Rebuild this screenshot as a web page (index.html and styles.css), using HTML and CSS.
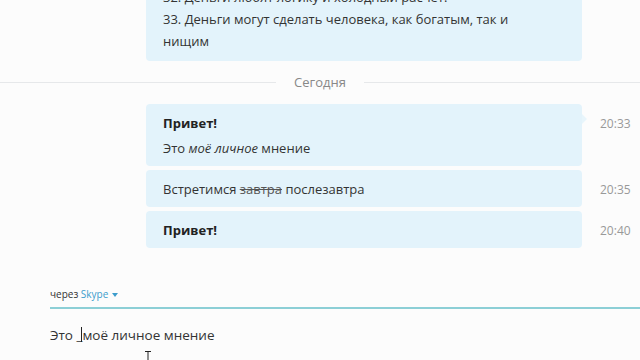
FILE: index.html
```html
<!DOCTYPE html>
<html lang="ru">
<head>
    <meta charset="UTF-8">
    <title>Чат</title>
    <link rel="stylesheet" href="styles.css">
</head>
<body>
    <div class="chat">
        <div class="messages">
            <div class="msg">
                <div class="bubble first">
                    32. Деньги любят логику и холодный расчет.<br>
                    33. Деньги могут сделать человека, как богатым, так и<br>
                    нищим
                </div>
            </div>

            <div class="day-sep"><span>Сегодня</span></div>

            <div class="msg">
                <div class="bubble tail">
                    <div class="line"><b>Привет!</b></div>
                    <div class="line">Это <i>моё личное</i> мнение</div>
                </div>
                <div class="time">20:33</div>
            </div>
            <div class="msg">
                <div class="bubble">Встретимся <s>завтра</s> послезавтра</div>
                <div class="time">20:35</div>
            </div>
            <div class="msg">
                <div class="bubble"><b>Привет!</b></div>
                <div class="time">20:40</div>
            </div>
        </div>

        <div class="composer">
            <div class="via">через <span class="via-link">Skype <span class="caret-down"></span></span></div>
            <div class="input">Это _<span class="cursor"></span>моё личное мнение</div>
            <svg class="ibeam" width="8" height="10" viewBox="0 0 8 10">
                <path d="M1 .5h6M4 .5v9M1 9.5h6" stroke="#222" stroke-width="1" fill="none"/>
            </svg>
        </div>
    </div>
</body>
</html>
```

FILE: styles.css
```css
body {
    margin: 0;
    background: #fcfcfc;
    font-family: 'Open Sans', 'Noto Sans', sans-serif;
    color: #333;
}
.chat {
    width: 640px;
    height: 359px;
    padding-top: 1px;
    overflow: hidden;
}
.messages {
    margin-top: -23px;
}
.msg {
    display: flex;
    align-items: flex-start;
    margin-bottom: 4px;
}
.bubble {
    width: 402px;
    margin-left: 146px;
    padding: 8px 17px 7px;
    background: #e3f3fb;
    border-radius: 4px;
    font-size: 13px;
    line-height: 22px;
    position: relative;
}
.bubble.first {
    padding-bottom: 9px;
}
.bubble .line + .line {
    margin-top: 3px;
}
.bubble b {
    font-weight: 700;
    color: #222;
}
.bubble s {
    color: #555;
}
.tail::after {
    content: "";
    position: absolute;
    right: -5px;
    top: 10px;
    border-left: 5px solid #e8f5fb;
    border-top: 5px solid transparent;
    border-bottom: 5px solid transparent;
}
.time {
    margin-left: 18px;
    padding-top: 9px;
    font-size: 12px;
    line-height: 22px;
    color: #999;
}
.day-sep {
    display: flex;
    align-items: center;
    gap: 18px;
    margin: 10px 0 11px;
    font-size: 13px;
    line-height: 22px;
    color: #888;
}
.day-sep::before,
.day-sep::after {
    content: "";
    flex: 1;
    height: 1px;
    background: #e6e8ea;
}
.composer {
    margin: 39px 0 0 50px;
    position: relative;
}
.via {
    font-size: 10px;
    line-height: 14px;
    color: #333;
    padding-bottom: 6px;
    border-bottom: 2px solid #8ccfd6;
}
.via-link {
    color: #3c9ccc;
}
.caret-down {
    display: inline-block;
    vertical-align: middle;
    border-top: 4px solid #3c9ccc;
    border-left: 3px solid transparent;
    border-right: 3px solid transparent;
    margin-left: 1px;
}
.input {
    margin-top: 15px;
    font-size: 13.5px;
    line-height: 22px;
    color: #333;
}
.cursor {
    display: inline-block;
    width: 1px;
    height: 15px;
    background: #222;
    vertical-align: -2px;
    margin-left: -1px;
}
.ibeam {
    position: absolute;
    left: 94px;
    top: 64px;
}
```
